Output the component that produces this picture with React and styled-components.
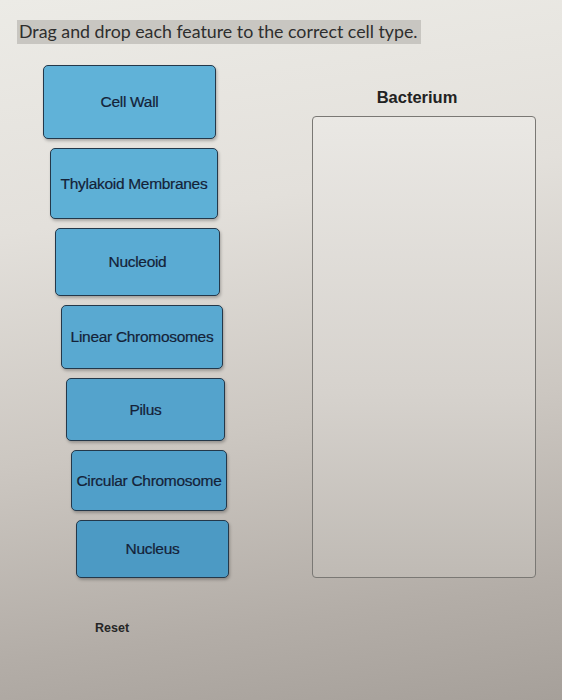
import React from 'react'
import styled, { createGlobalStyle } from 'styled-components';

const GlobalStyle = createGlobalStyle`
    html, body {
        margin: 0;
        padding: 0;
        height: 100%;
    }
    body {
        background: linear-gradient(172deg, #ecebe6 0%, #e3e0db 30%, #ccc7c1 60%, #b3ada7 85%, #a6a09a 100%);
        font-family: "Liberation Sans", Arial, sans-serif;
        overflow: hidden;
    }
`;

const features = [
    { label: "Cell Wall", indent: 43, w: 173, h: 74, tone: "#60b2d8" },
    { label: "Thylakoid Membranes", indent: 50, w: 168, h: 71, tone: "#5eb0d6" },
    { label: "Nucleoid", indent: 55, w: 165, h: 68, tone: "#5aabd3" },
    { label: "Linear Chromosomes", indent: 61, w: 162, h: 64, tone: "#59a9d1" },
    { label: "Pilus", indent: 66, w: 159, h: 63, tone: "#54a3cc" },
    { label: "Circular Chromosome", indent: 71, w: 156, h: 61, tone: "#509fc9" },
    { label: "Nucleus", indent: 76, w: 153, h: 58, tone: "#4c9ac4" },
];

export default function App() {
    return (
        <Page>
            <GlobalStyle />
            <Prompt>Drag and drop each feature to the correct cell type.</Prompt>
            <Board>
                <Choices>
                    {features.map((f) => (
                        <Card key={f.label} $indent={f.indent} $w={f.w} $h={f.h} $tone={f.tone}>
                            {f.label}
                        </Card>
                    ))}
                    <Reset>Reset</Reset>
                </Choices>
                <Target>
                    <TargetTitle>Bacterium</TargetTitle>
                    <DropBox />
                </Target>
            </Board>
        </Page>
    );
}

const Page = styled.div`
    width: 562px;
    height: 700px;
    padding-top: 20px;
    box-sizing: border-box;
`;

const Prompt = styled.div`
    display: inline-block;
    margin-left: 17px;
    padding: 2px 3px 3px 2px;
    background-color: #c8c6c1;
    color: #2e2e2e;
    font-family: "Lato", "Liberation Sans", sans-serif;
    font-size: 17.8px;
    line-height: 19px;
`;

const Board = styled.div`
    display: flex;
    margin-top: 21px;
`;

const Choices = styled.div`
    display: flex;
    flex-direction: column;
    gap: 9px;
    width: 300px;
`;

const Card = styled.div`
    margin-left: ${({ $indent }) => $indent}px;
    width: ${({ $w }) => $w}px;
    height: ${({ $h }) => $h}px;
    box-sizing: border-box;
    display: flex;
    align-items: center;
    justify-content: center;
    background-color: ${({ $tone }) => $tone};
    border: 1.5px solid #24384a;
    border-radius: 5px;
    box-shadow: 1px 2px 3px rgba(0, 0, 0, 0.25);
    color: #142238;
    font-size: 15.5px;
    letter-spacing: -0.3px;
    -webkit-text-stroke: 0.2px #142238;
`;

const Reset = styled.div`
    margin-left: 95px;
    margin-top: 34px;
    font-size: 12.5px;
    font-weight: bold;
    color: #262626;
`;

const Target = styled.div`
    display: flex;
    flex-direction: column;
    margin-left: 12px;
    padding-top: 23px;
`;

const TargetTitle = styled.div`
    width: 224px;
    text-align: center;
    font-size: 16.5px;
    font-weight: bold;
    color: #222;
    padding-right: 14px;
    box-sizing: border-box;
`;

const DropBox = styled.div`
    margin-top: 9px;
    width: 224px;
    height: 462px;
    box-sizing: border-box;
    border: 1px solid #7a7874;
    border-radius: 4px;
    background: linear-gradient(180deg, #eae8e4 0%, #d6d2cd 60%, #bfbab4 100%);
`;
